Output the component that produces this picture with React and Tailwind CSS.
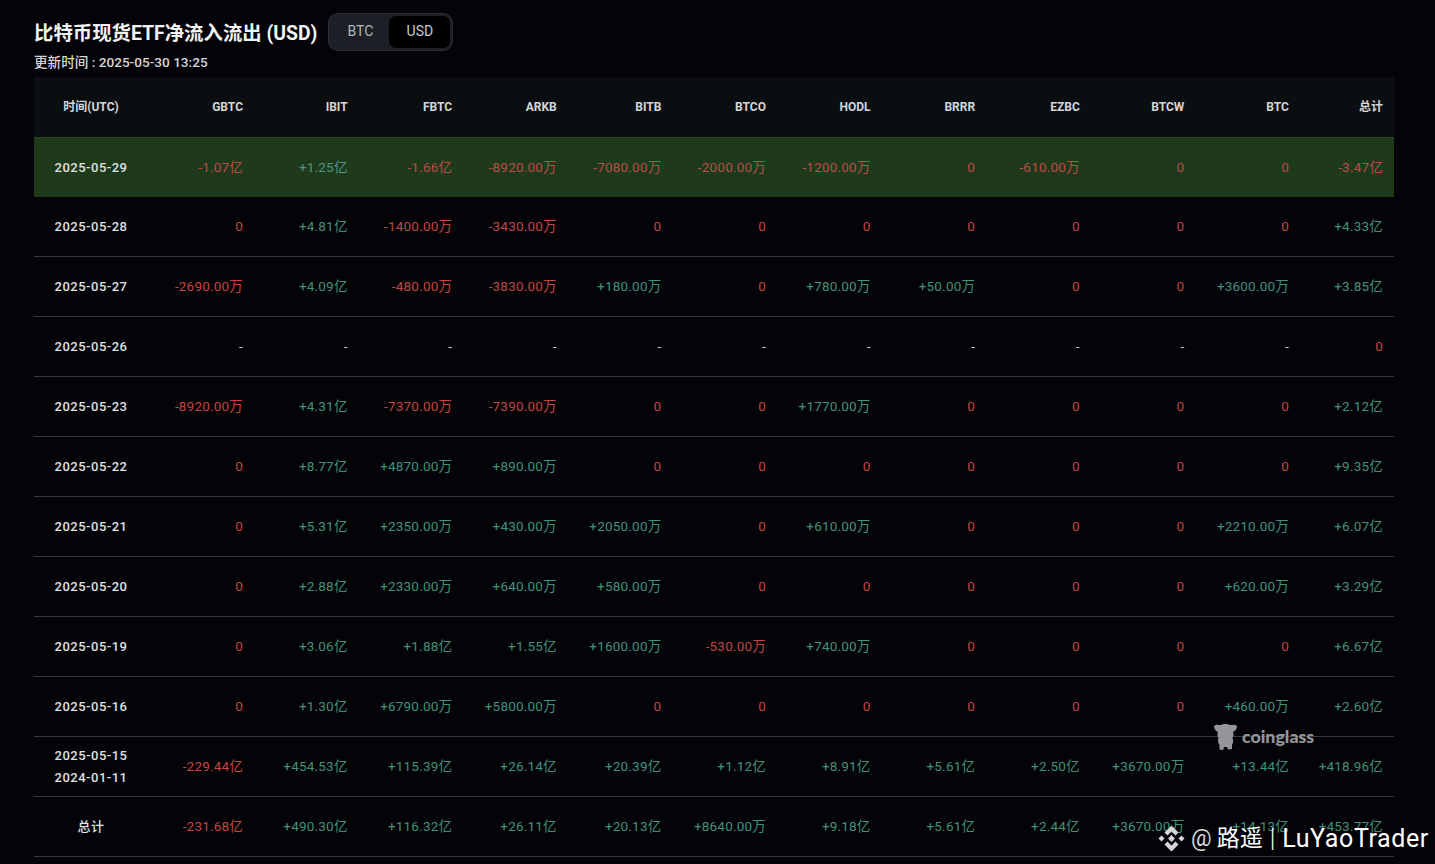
import React from 'react';

const COLUMNS = ['GBTC', 'IBIT', 'FBTC', 'ARKB', 'BITB', 'BTCO', 'HODL', 'BRRR', 'EZBC', 'BTCW', 'BTC', '总计'];

const ROWS = [
  { date: '2025-05-29', highlight: true, values: ['-1.07亿', '+1.25亿', '-1.66亿', '-8920.00万', '-7080.00万', '-2000.00万', '-1200.00万', '0', '-610.00万', '0', '0', '-3.47亿'] },
  { date: '2025-05-28', values: ['0', '+4.81亿', '-1400.00万', '-3430.00万', '0', '0', '0', '0', '0', '0', '0', '+4.33亿'] },
  { date: '2025-05-27', values: ['-2690.00万', '+4.09亿', '-480.00万', '-3830.00万', '+180.00万', '0', '+780.00万', '+50.00万', '0', '0', '+3600.00万', '+3.85亿'] },
  { date: '2025-05-26', values: ['-', '-', '-', '-', '-', '-', '-', '-', '-', '-', '-', '0'] },
  { date: '2025-05-23', values: ['-8920.00万', '+4.31亿', '-7370.00万', '-7390.00万', '0', '0', '+1770.00万', '0', '0', '0', '0', '+2.12亿'] },
  { date: '2025-05-22', values: ['0', '+8.77亿', '+4870.00万', '+890.00万', '0', '0', '0', '0', '0', '0', '0', '+9.35亿'] },
  { date: '2025-05-21', values: ['0', '+5.31亿', '+2350.00万', '+430.00万', '+2050.00万', '0', '+610.00万', '0', '0', '0', '+2210.00万', '+6.07亿'] },
  { date: '2025-05-20', values: ['0', '+2.88亿', '+2330.00万', '+640.00万', '+580.00万', '0', '0', '0', '0', '0', '+620.00万', '+3.29亿'] },
  { date: '2025-05-19', values: ['0', '+3.06亿', '+1.88亿', '+1.55亿', '+1600.00万', '-530.00万', '+740.00万', '0', '0', '0', '0', '+6.67亿'] },
  { date: '2025-05-16', values: ['0', '+1.30亿', '+6790.00万', '+5800.00万', '0', '0', '0', '0', '0', '0', '+460.00万', '+2.60亿'] },
  { date: '2025-05-15', date2: '2024-01-11', values: ['-229.44亿', '+454.53亿', '+115.39亿', '+26.14亿', '+20.39亿', '+1.12亿', '+8.91亿', '+5.61亿', '+2.50亿', '+3670.00万', '+13.44亿', '+418.96亿'] },
  { date: '总计', values: ['-231.68亿', '+490.30亿', '+116.32亿', '+26.11亿', '+20.13亿', '+8640.00万', '+9.18亿', '+5.61亿', '+2.44亿', '+3670.00万', '+14.13亿', '+453.77亿'] },
];

const GRID = 'grid grid-cols-[114px_106px_repeat(10,104.6px)_94px]';

function valueColor(value, highlight) {
  if (value === '-') return 'text-[#d0d2d4]';
  if (value.startsWith('+')) return highlight ? 'text-[#4f9488]' : 'text-[#429278]';
  return highlight ? 'text-[#bd4b48]' : 'text-[#c44543]';
}

function Row({ row }) {
  return (
    <div className={`${GRID} items-center h-[60px] ${row.highlight ? 'bg-[#1f3a1b] border-t border-[#2a4526]' : 'border-b border-[#38393b]'}`}>
      <div className="flex flex-col items-center text-[13px] leading-[22px] font-medium text-[#dfe1e3] tracking-[0.5px]">
        <span>{row.date}</span>
        {row.date2 && <span>{row.date2}</span>}
      </div>
      {row.values.map((value, i) => (
        <div key={i} className={`pr-[11px] text-right text-[13.5px] tracking-[0.2px] ${valueColor(value, row.highlight)}`}>
          {value}
        </div>
      ))}
    </div>
  );
}

function CoinglassMark() {
  return (
    <div className="absolute left-[1214px] top-[723px] flex items-center gap-[5px]">
      <svg width="23" height="28" viewBox="0 0 23 28" fill="#94969a">
        <path d="M0 3 C3 0.500 5 2.500 7 2 C9 0.500 14 0.500 16 2 C18 2.500 20 0.500 23 3 C23 6.500 20.500 8.500 19 9 C20 11.500 19.500 13 18.500 15 C19.500 17 19.500 20 18 22 L18 26 L14 26.500 L13 24 L10 24 L9 27 L5.500 26.500 L5.500 22 C4 20 3.500 17 4.500 15 C3.500 13 3 11.500 4 9 C2.500 8.500 0 6.500 0 3 Z" />
      </svg>
      <span className="font-['Lato',sans-serif] text-[17.8px] font-black text-[#94969a] leading-none">coinglass</span>
    </div>
  );
}

function BinanceWatermark() {
  return (
    <div className="absolute left-[1158px] top-[825px] flex items-center text-white font-['Roboto','Noto_Sans_CJK_SC',sans-serif]">
      <svg width="27" height="27" viewBox="0 0 27 27" fill="#d4d5d6">
        <path d="M13.500 0.500 L20.500 7.500 L17.500 10.500 L13.500 6.500 L9.500 10.500 L6.500 7.500 Z" />
        <path d="M13.500 26.500 L6.500 19.500 L9.500 16.500 L13.500 20.500 L17.500 16.500 L20.500 19.500 Z" />
        <path d="M0.500 13.500 L3.500 10.500 L6.500 13.500 L3.500 16.500 Z" />
        <path d="M20.500 13.500 L23.500 10.500 L26.500 13.500 L23.500 16.500 Z" />
        <path d="M13.500 10 L17 13.500 L13.500 17 L10 13.500 Z" />
      </svg>
      <span className="ml-[6px] text-[23px] leading-none text-[#d4d5d6]">@</span>
      <span className="ml-[5px] text-[23px] leading-none">路遥</span>
      <span className="ml-[7px] text-[25px] leading-none font-light">|</span>
      <span className="ml-[7px] text-[25px] leading-none tracking-[0.6px]">LuYaoTrader</span>
    </div>
  );
}

export default function App() {
  return (
    <div className="relative w-[1435px] h-[864px] overflow-hidden bg-[#030308] text-white font-['Roboto','Noto_Sans_CJK_SC',sans-serif]">
      <div className="pl-[34px] pr-[41px] pt-[12px]">
        {/* Title and unit toggle */}
        <div className="flex items-center gap-[11px] h-[39px]">
          <h1 className="text-[19.4px] font-bold leading-none mt-[4px] text-[#f2f3f3]">比特币现货ETF净流入流出 (USD)</h1>
          <div className="flex w-[125px] h-[38px] p-[2px] rounded-[10px] bg-[#1c2026] border border-[#2b3036] text-[14px]">
            <div className="w-[58px] flex items-center justify-center text-[#b4b7ba]">BTC</div>
            <div className="flex-1 flex items-center justify-center rounded-[7px] bg-black text-[#c8cacc]">USD</div>
          </div>
        </div>
        <div className="h-[22px] mb-[4px] flex items-center text-[13.6px] font-medium text-[#d4d6d8]">更新时间 : 2025-05-30 13:25</div>

        {/* Flow table */}
        <div>
          <div className={`${GRID} items-center h-[60px] bg-[#0b0e11] text-[12px] font-bold text-[#d4d6d8]`}>
            <div className="text-center">时间(UTC)</div>
            {COLUMNS.map(name => (
              <div key={name} className="pr-[11px] text-right">{name}</div>
            ))}
          </div>
          {ROWS.map(row => <Row key={row.date} row={row} />)}
        </div>
      </div>

      <CoinglassMark />
      <BinanceWatermark />
    </div>
  );
}
